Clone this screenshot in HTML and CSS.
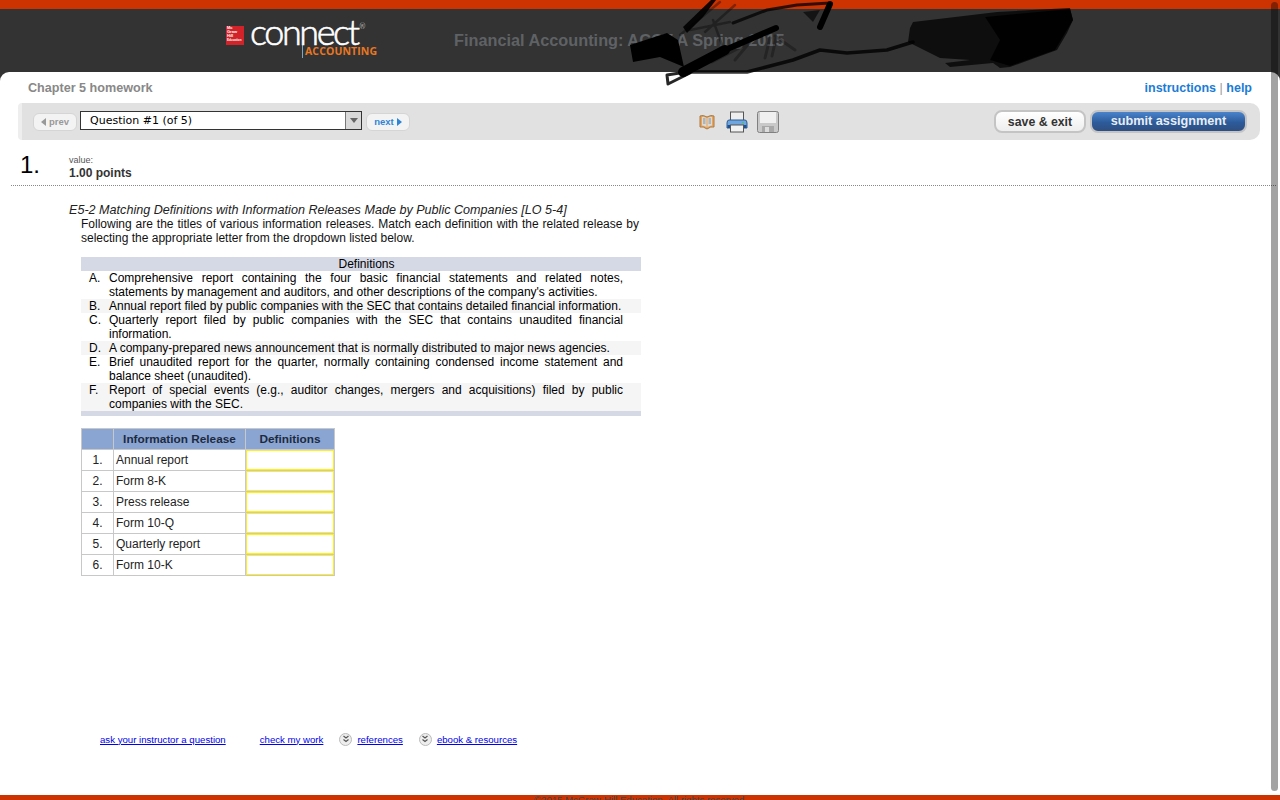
FILE: index.html
```html
<!DOCTYPE html>
<html lang="en">
<head>
    <meta charset="UTF-8">
    <title>Chapter 5 homework</title>
    <link rel="stylesheet" href="styles.css">
</head>
<body>

<header class="site-header">
    <div class="logo">
        <div class="logo-badge"><span>Mc</span><span>Graw</span><span>Hill</span><span class="logo-edu">Education</span></div>
        <div class="logo-words">
            <div class="logo-connect">connect<sup>®</sup></div>
            <div class="logo-product">ACCOUNTING</div>
        </div>
    </div>
    <div class="course-title">Financial Accounting: ACCT A Spring 2015</div>
</header>

<main class="content">
    <div class="title-row">
        <div class="assignment-name">Chapter 5 homework</div>
        <div class="top-links"><a>instructions</a> <span>|</span> <a>help</a></div>
    </div>

    <!-- Question toolbar -->
    <div class="toolbar">
        <div class="toolbar-left">
            <button class="nav-button prev"><span class="arrow-left"></span>prev</button>
            <div class="question-select">
                <span class="question-select-text">Question #1 (of 5)</span>
                <span class="question-select-arrow"></span>
            </div>
            <button class="nav-button next">next<span class="arrow-right"></span></button>
        </div>
        <div class="toolbar-icons">
            <svg class="icon-book" width="16" height="18" viewBox="0 0 16 18">
                <path d="M1 3 Q4 1.500 8 4 Q12 1.500 15 3 V14 Q12 13 8 16 Q4 13 1 14 Z" fill="#e8a35c" stroke="#a87a45" stroke-width="1"/>
                <path d="M3 4 Q5.500 3.500 7.500 5 V14 Q5.500 12.500 3 12.500 Z M13 4 Q10.500 3.500 8.500 5 V14 Q10.500 12.500 13 12.500 Z" fill="#d9d9d6"/>
                <path d="M4 6 H6.500 M4 8 H6.500 M4 10 H6.500 M9.500 6 H12 M9.500 8 H12 M9.500 10 H12" stroke="#8e8e8e" stroke-width="1"/>
            </svg>
            <svg class="icon-printer" width="22" height="22" viewBox="0 0 22 22">
                <rect x="4.500" y="1" width="13" height="9" fill="#eeeeee" stroke="#555" stroke-width="1"/>
                <path d="M3 9 H19 Q21 9 21 12 V17 H1 V12 Q1 9 3 9 Z" fill="#6fa6e0" stroke="#2d5c94" stroke-width="1"/>
                <rect x="1.500" y="14" width="19" height="3" fill="#1f4f8f"/>
                <rect x="4.500" y="14" width="13" height="7" fill="#f2f2f2" stroke="#555" stroke-width="1"/>
                <rect x="16" y="11" width="2" height="1" fill="#49c45a"/>
            </svg>
            <svg class="icon-disk" width="22" height="22" viewBox="0 0 22 22">
                <rect x="0.500" y="0.500" width="21" height="21" rx="2" fill="#c9c9c9" stroke="#808080" stroke-width="1"/>
                <rect x="3" y="1" width="16" height="11" fill="#f0f0f0"/>
                <rect x="5" y="15" width="12" height="6" fill="#a8a8a8"/>
                <rect x="8" y="16" width="4" height="5" fill="#dcdcdc"/>
            </svg>
        </div>
        <div class="toolbar-right">
            <button class="save-button">save &amp; exit</button>
            <button class="submit-button">submit assignment</button>
        </div>
    </div>

    <div class="question-head">
        <div class="question-number">1.</div>
        <div class="question-value">
            <div class="value-label">value:</div>
            <div class="value-points">1.00 points</div>
        </div>
    </div>

    <section class="question-body">
        <div class="question-title">E5-2 Matching Definitions with Information Releases Made by Public Companies [LO 5-4]</div>
        <p class="question-text">Following are the titles of various information releases. Match each definition with the related release by selecting the appropriate letter from the dropdown listed below.</p>

        <div class="definitions">
            <div class="definitions-head">Definitions</div>
            <div class="definition"><span class="def-letter">A.</span><span class="def-text">Comprehensive report containing the four basic financial statements and related notes, statements by management and auditors, and other descriptions of the company's activities.</span></div>
            <div class="definition alt"><span class="def-letter">B.</span><span class="def-text">Annual report filed by public companies with the SEC that contains detailed financial information.</span></div>
            <div class="definition"><span class="def-letter">C.</span><span class="def-text">Quarterly report filed by public companies with the SEC that contains unaudited financial information.</span></div>
            <div class="definition alt"><span class="def-letter">D.</span><span class="def-text">A company-prepared news announcement that is normally distributed to major news agencies.</span></div>
            <div class="definition"><span class="def-letter">E.</span><span class="def-text">Brief unaudited report for the quarter, normally containing condensed income statement and balance sheet (unaudited).</span></div>
            <div class="definition alt"><span class="def-letter">F.</span><span class="def-text">Report of special events (e.g., auditor changes, mergers and acquisitions) filed by public companies with the SEC.</span></div>
        </div>

        <table class="match-table">
            <thead>
                <tr><th class="col-num"></th><th class="col-release">Information Release</th><th class="col-def">Definitions</th></tr>
            </thead>
            <tbody>
                <tr><td class="num">1.</td><td>Annual report</td><td class="answer"><div class="answer-box"></div></td></tr>
                <tr><td class="num">2.</td><td>Form 8-K</td><td class="answer"><div class="answer-box"></div></td></tr>
                <tr><td class="num">3.</td><td>Press release</td><td class="answer"><div class="answer-box"></div></td></tr>
                <tr><td class="num">4.</td><td>Form 10-Q</td><td class="answer"><div class="answer-box"></div></td></tr>
                <tr><td class="num">5.</td><td>Quarterly report</td><td class="answer"><div class="answer-box"></div></td></tr>
                <tr><td class="num">6.</td><td>Form 10-K</td><td class="answer"><div class="answer-box"></div></td></tr>
            </tbody>
        </table>
    </section>

    <nav class="bottom-links">
        <a class="link-ask">ask your instructor a question</a>
        <a class="link-check">check my work</a>
        <span class="chevron-circle"><svg width="8" height="8" viewBox="0 0 8 8"><path d="M1.500 1 L4 3 L6.500 1 M1.500 4.500 L4 6.500 L6.500 4.500" fill="none" stroke="#555" stroke-width="1.200"/></svg></span>
        <a class="link-ref">references</a>
        <span class="chevron-circle"><svg width="8" height="8" viewBox="0 0 8 8"><path d="M1.500 1 L4 3 L6.500 1 M1.500 4.500 L4 6.500 L6.500 4.500" fill="none" stroke="#555" stroke-width="1.200"/></svg></span>
        <a class="link-ebook">ebook &amp; resources</a>
    </nav>
</main>

<footer class="site-footer">©2015 McGraw-Hill Education. All rights reserved.</footer>

<!-- pen scribble over the header -->
<svg class="scribble" width="480" height="90" viewBox="620 0 480 90">
    <defs>
        <filter id="smudge" x="-5%" y="-5%" width="110%" height="110%"><feGaussianBlur stdDeviation="0.7"/></filter>
    </defs>
    <g filter="url(#smudge)">
        <!-- right blob -->
        <path d="M913 22 L997 12 L1070 8 L1073 20 L1067 33 L1057 50 L1010 67 L1000 68 L993 63 L950 67 L945 63 L970 60 L940 58 L920 48 L908 42 L910 28 Z" fill="#000" fill-opacity="0.72"/>
        <path d="M985 17 L1070 9 L1073 20 L1055 50 L1010 66 L990 60 L1000 40 Z" fill="#000" fill-opacity="0.9"/>
        <!-- left blob -->
        <path d="M630 45 L667 33 L678 40 L684 67 L660 57 L633 62 Z" fill="#000"/>
        <path d="M683 27 L711 0 L716 0 L703 17 L687 33 Z" fill="#000" fill-opacity="0.9"/>
        <path d="M803 12 L813 22 L820 10 Z" fill="#000" fill-opacity="0.6"/>
        <g fill="none" stroke="#000" stroke-linecap="round" stroke-linejoin="round">
            <path d="M683 72 L725 50" stroke-width="10"/>
            <path d="M725 50 L776 28" stroke-width="6"/>
            <path d="M686 72 L667 75 L668 84 L690 73" stroke-width="3" stroke-opacity="0.85"/>
            <path d="M687 72 L747 72 L793 60 L820 50 L847 53 L887 50 L913 42" stroke-width="3.500" stroke-opacity="0.8"/>
            <path d="M733 23 L767 10 L797 5 L830 3" stroke-width="3" stroke-opacity="0.75"/>
            <path d="M830 4 L820 27" stroke-width="6"/>
            <path d="M680 35 L720 2 M705 32 L735 5 M690 30 L730 22 M713 20 L722 45" stroke-width="2.500" stroke-opacity="0.35"/>
            <path d="M712 62 L745 45 M735 60 L750 42 M765 58 L770 38 M772 56 L776 38 M775 36 L795 50" stroke-width="3" stroke-opacity="0.3"/>
        </g>
    </g>
</svg>

<div class="scroll-thumb"></div>

</body>
</html>
```

FILE: styles.css
```css
html, body {
    margin: 0;
    padding: 0;
    height: 800px;
    overflow: hidden;
}
body {
    font-family: "Liberation Sans", Arial, sans-serif;
    font-size: 12px;
    color: #000;
    background-color: #333;
    display: flex;
    flex-direction: column;
}
a {
    cursor: pointer;
}

/* header */
.site-header {
    height: 63px;
    flex: none;
    border-top: 9px solid #cc3300;
    background-color: #333;
    display: flex;
    align-items: flex-start;
}
.logo {
    display: flex;
    margin-left: 226px;
    padding-top: 9px;
    width: 228px;
    flex: none;
}
.logo-badge {
    width: 18px;
    height: 19px;
    margin-top: 8px;
    background-color: #d2232a;
    color: #fff;
    font-size: 4px;
    line-height: 4px;
    font-weight: bold;
    display: flex;
    flex-direction: column;
    padding-left: 1px;
    box-sizing: border-box;
}
.logo-edu {
    font-size: 3px;
    line-height: 4px;
}
.logo-words {
    margin-left: 6px;
}
.logo-connect {
    font-family: "Lato", sans-serif;
    font-weight: 300;
    font-size: 36px;
    line-height: 27px;
    letter-spacing: -2.4px;
    color: #fff;
    -webkit-text-stroke: 0.6px #fff;
    white-space: nowrap;
}
.logo-connect sup {
    font-size: 7px;
    line-height: 0;
    vertical-align: 16px;
    letter-spacing: 0;
    -webkit-text-stroke: 0;
    margin-left: 2px;
}
.logo-product {
    margin-left: 52px;
    border-left: 1px solid #7ea6c4;
    padding-left: 2px;
    height: 13px;
    font-family: "Open Sans", sans-serif;
    font-weight: bold;
    font-size: 10.5px;
    line-height: 13px;
    letter-spacing: 0.1px;
    color: #e87722;
}
.course-title {
    margin-top: 21px;
    font-weight: bold;
    font-size: 16.300px;
    line-height: 20px;
    color: #5f6265;
    white-space: nowrap;
}

/* main white panel */
.content {
    flex: 1;
    background-color: #fff;
    border-radius: 9px 9px 0 0;
    position: relative;
}
.title-row {
    display: flex;
    justify-content: space-between;
    padding: 9px 28px 0 28px;
    height: 22px;
    line-height: 14px;
    font-weight: bold;
}
.assignment-name {
    color: #888;
    font-size: 12.600px;
}
.top-links {
    color: #1b7cd6;
    font-size: 12.500px;
}
.top-links span {
    color: #999;
    font-weight: normal;
}

.toolbar {
    margin-left: 18px;
    width: 1242px;
    height: 37px;
    background-color: #e1e1e1;
    border-left: 4px solid #eeeeee;
    border-radius: 4px 10px 10px 4px;
    box-sizing: border-box;
    display: flex;
    align-items: center;
}
.toolbar-left {
    display: flex;
    align-items: center;
    margin-left: 11px;
    width: 666px;
    flex: none;
}
.nav-button {
    width: 44px;
    height: 18px;
    padding: 0;
    border: 1px solid #d5d5d5;
    border-radius: 6px;
    background-color: #f3f3f3;
    font-family: "Liberation Sans", Arial, sans-serif;
    font-size: 9.500px;
    font-weight: bold;
    display: flex;
    align-items: center;
    justify-content: center;
    gap: 3px;
}
.prev {
    color: #999;
}
.next {
    color: #2f84d6;
}
.arrow-left {
    border-style: solid;
    border-width: 4px 5px 4px 0;
    border-color: transparent #999 transparent transparent;
}
.arrow-right {
    border-style: solid;
    border-width: 4px 0 4px 5px;
    border-color: transparent transparent transparent #2f84d6;
}
.question-select {
    width: 282px;
    height: 19px;
    margin: 0 4px 2px 3px;
    background-color: #fff;
    border: 1px solid #333;
    box-sizing: border-box;
    display: flex;
    justify-content: space-between;
    align-items: center;
}
.question-select-text {
    font-family: "DejaVu Sans", Verdana, sans-serif;
    font-size: 11px;
    padding-left: 9px;
}
.question-select-arrow {
    width: 16px;
    height: 100%;
    background-color: #d9d9d9;
    border-left: 1px solid #777;
    box-sizing: border-box;
    display: flex;
    align-items: center;
    justify-content: center;
}
.question-select-arrow::before {
    content: "";
    border-style: solid;
    border-width: 5px 4px 0 4px;
    border-color: #666 transparent transparent transparent;
}
.toolbar-icons {
    display: flex;
    align-items: center;
    flex: none;
}
.icon-book {
    margin-right: 11px;
}
.icon-printer {
    margin-right: 9px;
}
.toolbar-right {
    display: flex;
    align-items: center;
    gap: 4px;
    margin-left: auto;
    margin-right: 13px;
}
.save-button, .submit-button {
    height: 23px;
    padding: 0;
    border-radius: 8px;
    font-family: "Liberation Sans", Arial, sans-serif;
    font-weight: bold;
}
.save-button {
    width: 92px;
    font-size: 12.300px;
    color: #333;
    border: 2px solid #c4c4c4;
    background: linear-gradient(#ffffff, #eeeeee);
}
.submit-button {
    width: 157px;
    font-size: 12.700px;
    color: #e8eef6;
    border: 2px solid #c4c4c4;
    background: linear-gradient(#4a84cc, #2c5b9a 55%, #2f4f80);
    padding-bottom: 2px;
}

.question-head {
    height: 45px;
    margin: 0 4px 0 11px;
    border-bottom: 1px dotted #888;
    display: flex;
}
.question-number {
    width: 58px;
    padding: 12px 0 0 9px;
    box-sizing: border-box;
    font-size: 24px;
    line-height: 26px;
}
.value-label {
    font-size: 9px;
    line-height: 10px;
    color: #555;
    margin-top: 15px;
}
.value-points {
    font-size: 12px;
    line-height: 16px;
    font-weight: bold;
    color: #333;
}

/* question */
.question-body {
    padding: 17px 0 0 69px;
    width: 572px;
}
.question-title {
    font-style: italic;
    font-size: 12.600px;
    line-height: 14px;
    color: #222;
    white-space: nowrap;
}
.question-text {
    margin: 0 2px 12px 12px;
    line-height: 14px;
    text-align: justify;
    color: #111;
}
.definitions {
    margin-left: 12px;
    width: 560px;
    border-bottom: 5px solid #d5d9e6;
}
.definitions-head {
    background-color: #d5d9e6;
    text-align: center;
    height: 14px;
    line-height: 14px;
    padding-left: 11px;
}
.definition {
    display: flex;
    line-height: 14px;
}
.definition.alt {
    background-color: #f5f5f5;
}
.def-letter {
    width: 28px;
    padding-left: 8px;
    box-sizing: border-box;
    flex: none;
}
.def-text {
    width: 514px;
    flex: none;
    text-align: justify;
}

.match-table {
    margin: 12px 0 0 12px;
    border-collapse: collapse;
    border: 1px solid #c8c8c8;
    table-layout: fixed;
    width: 254px;
}
.match-table th, .match-table td {
    border: 1px solid #c8c8c8;
    padding: 0;
    box-sizing: border-box;
}
.match-table th {
    background-color: #8ba5d3;
    color: #1c2a40;
    font-size: 11.800px;
    font-weight: bold;
    height: 21px;
}
.col-num {
    width: 32px;
}
.col-release {
    width: 132px;
}
.match-table td {
    padding-left: 2px;
    height: 21px;
    color: #222;
    font-size: 12px;
}
.match-table td.num {
    text-align: center;
    padding-left: 0;
}
.match-table td.answer {
    padding: 0;
}
.answer-box {
    height: 20px;
    border: 1px solid #ffee22;
    box-sizing: border-box;
}

/* links at bottom of question */
.bottom-links {
    position: absolute;
    top: 659px;
    left: 100px;
    display: flex;
    align-items: center;
    height: 16px;
    font-size: 9.650px;
}
.bottom-links a {
    color: #0000ee;
    text-decoration: underline;
}
.link-check {
    margin-left: 34px;
}
.chevron-circle {
    width: 13px;
    height: 13px;
    margin: 0 5px 0 16px;
    border: 1px solid #bbb;
    border-radius: 50%;
    background-color: #eee;
    box-sizing: border-box;
    display: flex;
    align-items: center;
    justify-content: center;
}

.site-footer {
    height: 5px;
    flex: none;
    overflow: hidden;
    background-color: #cc3300;
    color: #444;
    font-size: 9.600px;
    line-height: 10px;
    padding-left: 534px;
}

.scribble {
    position: absolute;
    left: 620px;
    top: 0;
}
.scroll-thumb {
    position: absolute;
    left: 1271px;
    top: 2px;
    width: 7px;
    height: 789px;
    border-radius: 4px;
    background-color: rgba(0, 0, 0, 0.36);
}
```
